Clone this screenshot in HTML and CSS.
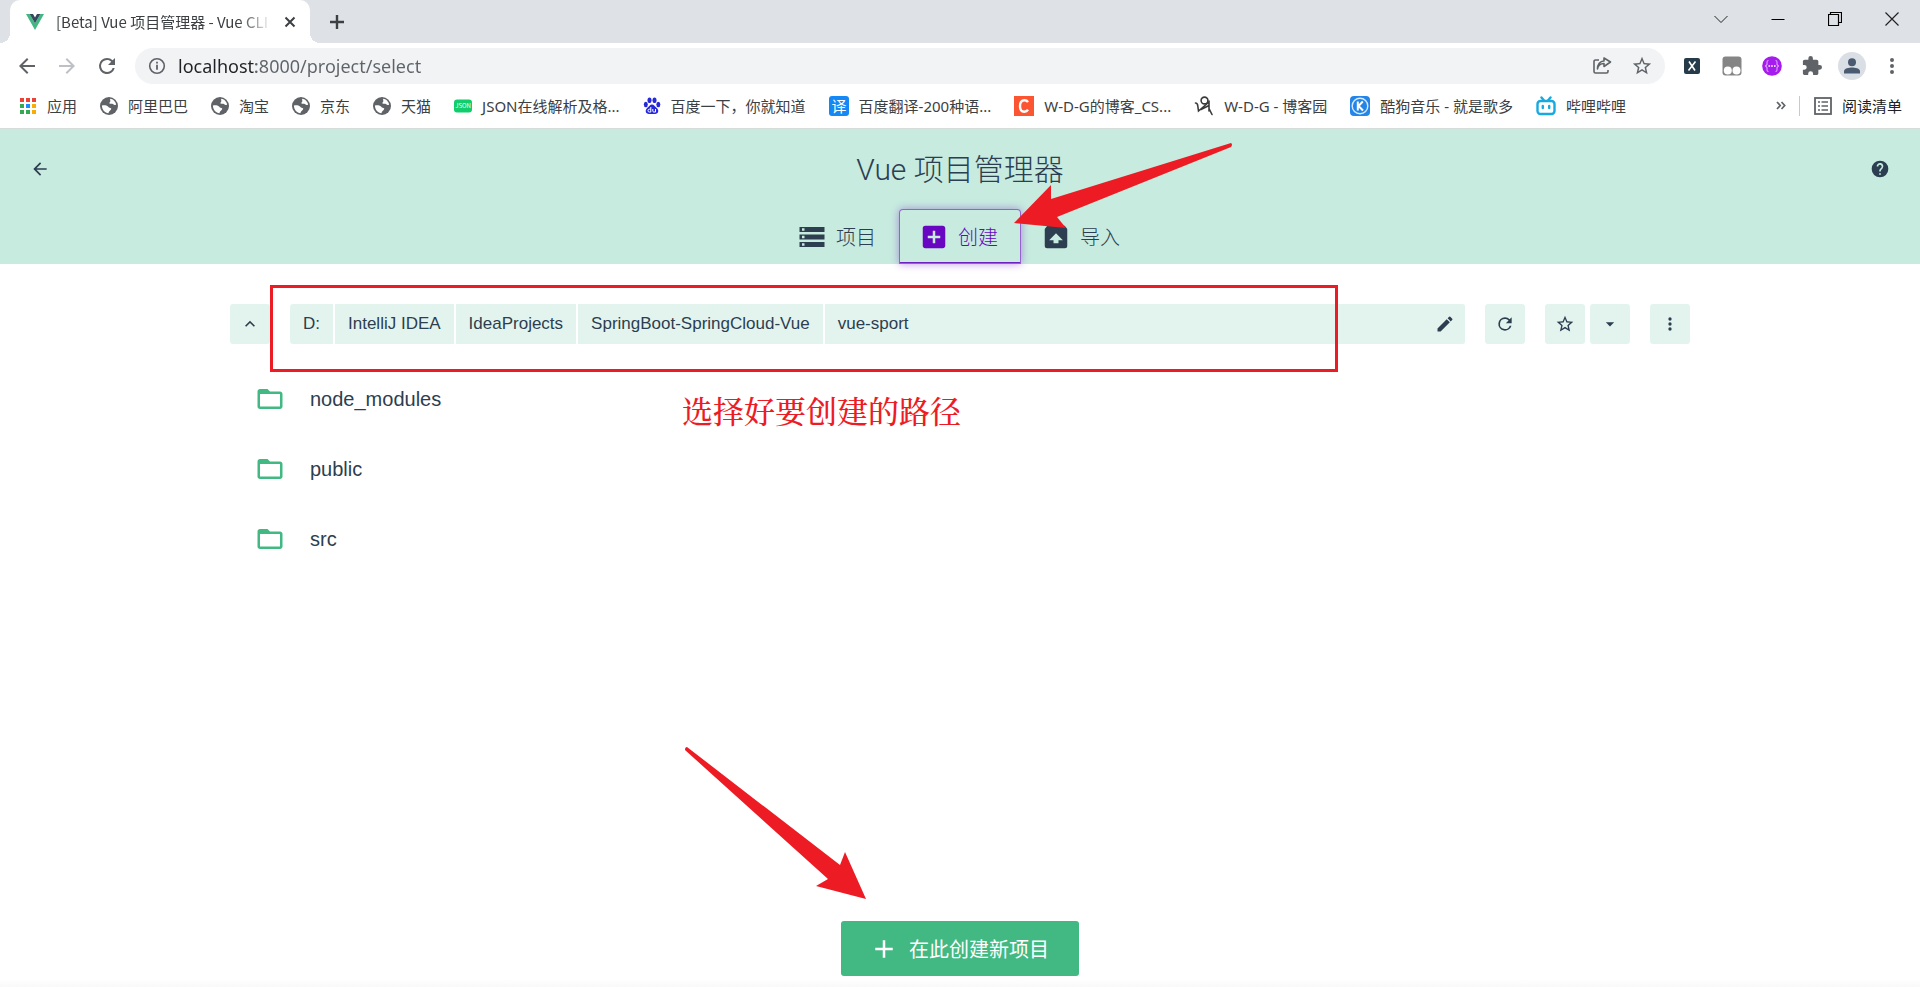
FILE: index.html
```html
<!DOCTYPE html>
<html lang="zh-CN">
<head>
<meta charset="utf-8">
<title>[Beta] Vue 项目管理器 - Vue CLI</title>
<link rel="stylesheet" href="styles.css">
</head>
<body>
<svg class="defs" width="0" height="0" aria-hidden="true">
  <symbol id="globe" viewBox="0 0 18 18"><circle cx="9" cy="9" r="9" fill="#5f6368"/><path d="M10 1.800C13 2 15.500 4.500 16.100 7.500 15 8.500 13.800 8 13 7 12 6.500 10.500 7 9.500 6.500 8.800 5.500 10.800 5 10.300 3.800ZM1.900 8.500C4 8 6.500 8 8 9.500 8.500 11 10.500 10.500 11.200 11.500 11.500 13 9 13.500 8.500 16.200 5 16 2 13 1.900 8.500Z" fill="#fff"/></symbol>
  <symbol id="star" viewBox="0 0 24 24"><path d="M22 9.240l-7.190-.62L12 2 9.190 8.630 2 9.240l5.460 4.730L5.820 21 12 17.270 18.180 21l-1.630-7.030L22 9.240zM12 15.400l-3.760 2.270 1-4.280-3.320-2.880 4.380-.38L12 6.100l1.710 4.040 4.380.38-3.320 2.880 1 4.280L12 15.400z"/></symbol>
  <symbol id="reload" viewBox="0 0 24 24"><path d="M17.650 6.350A7.960 7.960 0 0 0 12 4a8 8 0 1 0 7.730 10h-2.080A6 6 0 1 1 12 6c1.660 0 3.140.69 4.220 1.780L13 11h7V4l-2.350 2.350z"/></symbol>
  <symbol id="back" viewBox="0 0 24 24"><path d="M20 11H7.830l5.590-5.590L12 4l-8 8 8 8 1.410-1.410L7.830 13H20v-2z"/></symbol>
  <symbol id="dots" viewBox="0 0 24 24"><path d="M12 8a2 2 0 1 0 0-4 2 2 0 0 0 0 4zm0 2a2 2 0 1 0 0 4 2 2 0 0 0 0-4zm0 6a2 2 0 1 0 0 4 2 2 0 0 0 0-4z"/></symbol>
  <symbol id="folder" viewBox="0 0 24 24"><path d="M20 6h-8l-2-2H4c-1.100 0-1.990.9-1.990 2L2 18c0 1.100.9 2 2 2h16c1.100 0 2-.9 2-2V8c0-1.100-.9-2-2-2zm0 12H4V8h16v10z"/></symbol>
</svg>

<header class="browser">
  <div class="tabstrip">
    <div class="tab">
      <svg class="i18" viewBox="0 0 18 18"><path d="M0 1h3.600L9 10.300 14.400 1H18L9 17Z" fill="#41b883"/><path d="M3.600 1H7L9 4.500 11 1h3.400L9 10.300Z" fill="#35495e"/></svg>
      <span class="tab-title">[Beta] Vue 项目管理器 - Vue CLI</span>
      <button class="plain" aria-label="关闭标签页"><svg class="i12" viewBox="0 0 12 12"><path d="M1.500 1.500l9 9M10.500 1.500l-9 9" stroke="#3c4043" stroke-width="2"/></svg></button>
    </div>
    <button class="plain new-tab" aria-label="新标签页"><svg class="i16" viewBox="0 0 16 16"><path d="M8 1v14M1 8h14" stroke="#3c4043" stroke-width="2.400"/></svg></button>
    <div class="window-buttons">
      <button class="plain" aria-label="搜索标签页"><svg class="i14" viewBox="0 0 14 14"><path d="M.5 4L7 10.500 13.500 4" fill="none" stroke="#222"/></svg></button>
      <button class="plain" aria-label="最小化"><svg class="i14" viewBox="0 0 14 14"><path d="M.5 7.500h13" stroke="#000"/></svg></button>
      <button class="plain" aria-label="还原"><svg class="i14" viewBox="0 0 14 14"><path d="M.5 2.500h10v11H.5zM2.500 2.500v-2h11v10h-3" fill="none" stroke="#000" stroke-width="1.200"/></svg></button>
      <button class="plain" aria-label="关闭"><svg class="i14" viewBox="0 0 14 14"><path d="M.5.5l13 13M13.500.5l-13 13" stroke="#222" stroke-width="1.200"/></svg></button>
    </div>
  </div>

  <div class="toolbar">
    <div class="nav-buttons">
      <button class="plain" aria-label="后退"><svg class="i24" fill="#5f6368"><use href="#back"/></svg></button>
      <button class="plain forward" aria-label="前进"><svg class="i24 flip" fill="#bdc1c6"><use href="#back"/></svg></button>
      <button class="plain" aria-label="重新加载"><svg class="i24" fill="#5f6368"><use href="#reload"/></svg></button>
    </div>
    <div class="omnibox">
      <svg class="i18" viewBox="0 0 18 18"><circle cx="9" cy="9" r="7.300" fill="none" stroke="#5f6368" stroke-width="1.600"/><path d="M8.100 7.800h1.800v5H8.100zM8.100 4.800h1.800v1.800H8.100z" fill="#5f6368"/></svg>
      <input class="url" type="text" aria-label="地址" value="localhost:8000/project/select">
      <button class="plain" aria-label="分享"><svg class="i20" viewBox="0 0 20 20" fill="none" stroke="#5f6368" stroke-width="1.600" stroke-linejoin="round"><path d="M7 4H3.500A1.500 1.500 0 0 0 2 5.500v10A1.500 1.500 0 0 0 3.500 17h11a1.500 1.500 0 0 0 1.500-1.500V14M5.500 13C6 9.500 8.500 7.500 12 7.500v3L18.500 6 12 2v3C8 5 5.500 8.500 5.500 13Z"/></svg></button>
      <button class="plain" aria-label="收藏"><svg class="i22" fill="#5f6368"><use href="#star"/></svg></button>
    </div>
    <div class="extensions">
      <button class="plain" aria-label="扩展 X"><svg class="i16" viewBox="0 0 16 16"><rect width="16" height="16" rx="2" fill="#263b49"/><path d="M5 3.500l6 9M11.500 3.500l-7 9" stroke="#fff" stroke-width="1.600"/></svg></button>
      <button class="plain" aria-label="扩展 Tampermonkey"><svg class="i20" viewBox="0 0 20 20"><rect x=".5" y=".5" width="19" height="19" rx="3" fill="#858585"/><circle cx="5.800" cy="14.500" r="4" fill="#fff"/><circle cx="14.500" cy="14.500" r="4" fill="#fff"/></svg></button>
      <button class="plain" aria-label="扩展 JSON"><svg class="i20" viewBox="0 0 20 20"><circle cx="10" cy="10" r="9.800" fill="#a61bee"/><path d="M6.500 4.500Q5 4.500 5 6v2.500L3.500 10 5 11.500V14q0 1.500 1.500 1.500M13.500 4.500q1.500 0 1.500 1.500v2.500l1.500 1.500-1.500 1.500V14q0 1.500-1.500 1.500" fill="none" stroke="#dba3fa" stroke-width="1.100"/><path d="M6.500 10h1.600M9.200 10h1.600M12 10h1.600" stroke="#fff" stroke-width="1.600"/></svg></button>
      <button class="plain" aria-label="扩展程序"><svg class="i20" viewBox="1 1 22 22"><path fill="#5f6368" d="M20.500 11H19V7c0-1.100-.9-2-2-2h-4V3.500a2.500 2.500 0 0 0-5 0V5H4c-1.100 0-2 .9-2 2v3.800h1.500a2.700 2.700 0 0 1 0 5.400H2V20c0 1.100.9 2 2 2h3.800v-1.500a2.700 2.700 0 0 1 5.400 0V22H17c1.100 0 2-.9 2-2v-4h1.500a2.500 2.500 0 0 0 0-5z"/></svg></button>
      <button class="plain" aria-label="用户"><svg class="i28" viewBox="0 0 28 28"><circle cx="14" cy="14" r="14" fill="#dadfe5"/><circle cx="14" cy="10.200" r="4" fill="#4a5a70"/><path d="M6 21.500v-2.200C6 16.500 11 15.500 14 15.500s8 1 8 3.800v2.200Z" fill="#4a5a70"/></svg></button>
      <button class="plain" aria-label="菜单"><svg class="i24" fill="#5f6368"><use href="#dots"/></svg></button>
    </div>
  </div>

  <nav class="bookmarks" aria-label="书签">
    <a href="#"><svg class="i18" viewBox="0 0 18 18"><path d="M1 1h4v4H1zM7 1h4v4H7zM13 1h4v4h-4z" fill="#ea4335"/><path d="M1 7h4v4H1zM1 13h4v4H1z" fill="#34a853"/><path d="M7 7h4v4H7z" fill="#1a8cff"/><path d="M13 7h4v4h-4zM13 13h4v4h-4z" fill="#fbac04"/><path d="M7 13h4v4H7z" fill="#34a853"/></svg>应用</a>
    <a href="#"><svg class="i18"><use href="#globe"/></svg>阿里巴巴</a>
    <a href="#"><svg class="i18"><use href="#globe"/></svg>淘宝</a>
    <a href="#"><svg class="i18"><use href="#globe"/></svg>京东</a>
    <a href="#"><svg class="i18"><use href="#globe"/></svg>天猫</a>
    <a href="#"><svg class="i18" viewBox="0 0 18 18"><rect y="2.500" width="18" height="13" rx="3" fill="#0fce6b"/><text x="9" y="11.200" class="mini" font-size="6">JSON</text></svg>JSON在线解析及格...</a>
    <a href="#"><svg class="i18" viewBox="0 0 18 18" fill="#2529d8"><ellipse cx="2.800" cy="7.500" rx="2" ry="2.700"/><ellipse cx="6.500" cy="3.300" rx="2" ry="2.800"/><ellipse cx="11.500" cy="3.300" rx="2" ry="2.800"/><ellipse cx="15.300" cy="7.500" rx="2" ry="2.700"/><path d="M9 7.500c2 0 3 2 4.500 3.300 3 2.500 2 6.200-1.500 6.200H6c-3.500 0-4.500-3.700-1.500-6.200C6 9.500 7 7.500 9 7.500Z"/><path d="M7.800 10v5H6.300q-1.300 0-1.300-1.400T6.300 12.200h1.500M9.800 12v2q0 1 1 1h1.700v-3" fill="none" stroke="#fff"/></svg>百度一下，你就知道</a>
    <a href="#"><svg class="i20" viewBox="0 0 20 20"><rect width="20" height="20" rx="3" fill="#1488f5"/><text x="10" y="15.500" class="mini" font-size="15">译</text></svg>百度翻译-200种语...</a>
    <a href="#"><svg class="i20" viewBox="0 0 20 20"><rect width="20" height="20" fill="#fc5531"/><path d="M14 6.200Q12.800 4.300 10.500 4.300 6 4.300 6 10t4.200 5.700q2.600 0 3.800-2" fill="none" stroke="#fff" stroke-width="2.400"/></svg>W-D-G的博客_CS...</a>
    <a href="#"><svg class="i20" viewBox="0 0 20 20" fill="none" stroke="#3b3b3b" stroke-width="1.600"><circle cx="10.500" cy="4.500" r="3.400"/><path d="M1.500 7Q3.500 7 3.800 10L4.500 15 15 6M7 13.500L15 9.500M15 5v7.500L18 18.500M15 12v3" stroke-linecap="round"/></svg>W-D-G - 博客园</a>
    <a href="#"><svg class="i20" viewBox="0 0 20 20"><rect width="20" height="20" rx="4" fill="#2385e8"/><circle cx="10" cy="10" r="7.800" fill="none" stroke="#d5eaff" stroke-width="1.400"/><path d="M7.800 5.500v9M12.800 5.500L8.500 10l4.500 4.500" fill="none" stroke="#fff" stroke-width="2"/></svg>酷狗音乐 - 就是歌多</a>
    <a href="#"><svg class="i20" viewBox="0 0 20 20" fill="none" stroke="#18a9df" stroke-width="2.400"><rect x="1.500" y="5" width="17" height="13" rx="3"/><path d="M5.500 1.500L8 4.500M14.500 1.500L12 4.500M6.800 10v2M13.200 10v2" stroke-linecap="round"/></svg>哔哩哔哩</a>
    <div class="bookmarks-end">
      <button class="plain more" aria-label="更多书签"><svg class="i12" viewBox="0 0 12 12"><path d="M2 2l3.200 3.500L2 9M6.500 2l3.200 3.500L6.500 9" fill="none" stroke="#5f6368" stroke-width="1.700"/></svg></button>
      <a class="reading" href="#"><svg class="i18" viewBox="0 0 18 18"><rect x="1" y="1" width="16" height="16" fill="none" stroke="#5f6368" stroke-width="1.800"/><path d="M4 5h2M7.500 5H14M4 9h2M7.500 9H14M4 13h2M7.500 13H14" stroke="#5f6368" stroke-width="1.700"/></svg>阅读清单</a>
    </div>
  </nav>
</header>

<section class="hero">
  <div class="hero-top">
    <button class="plain" aria-label="返回"><svg class="i20" fill="#2c3e50"><use href="#back"/></svg></button>
    <h1>Vue 项目管理器</h1>
    <button class="plain" aria-label="帮助"><svg class="i20" viewBox="0 0 24 24"><path fill="#2c3e50" d="M12 2a10 10 0 1 0 0 20 10 10 0 0 0 0-20zm1 17h-2v-2h2v2zm2.070-7.750l-.9.920C13.450 12.900 13 13.500 13 15h-2v-.5c0-1.100.45-2.100 1.170-2.830l1.240-1.260A2 2 0 1 0 10 9H8a4 4 0 1 1 7.070 2.250z"/></svg></button>
  </div>
  <nav class="views">
    <a href="#"><svg class="i30" viewBox="0 0 24 24" fill="#2c3e50"><path d="M2 20h20v-4H2v4zm2-3h2v2H4v-2zM2 4v4h20V4H2zm4 3H4V5h2v2zm-4 7h20v-4H2v4zm2-3h2v2H4v-2z"/></svg>项目</a>
    <a href="#" class="active" aria-current="page"><svg class="i30" viewBox="0 0 24 24" fill="#6806c1"><path d="M19 3H5a2 2 0 0 0-2 2v14c0 1.100.9 2 2 2h14c1.100 0 2-.9 2-2V5c0-1.100-.9-2-2-2zm-2 10h-4v4h-2v-4H7v-2h4V7h2v4h4v2z"/></svg>创建</a>
    <a href="#"><svg class="i30" viewBox="0 0 24 24" fill="#2c3e50"><path d="M5 3h14l2 2.500V19a2 2 0 0 1-2 2H5a2 2 0 0 1-2-2V5.500Zm7 6l-5.500 5.500H10V17h4v-2.500h3.500Z"/></svg>导入</a>
  </nav>
</section>

<main>
  <div class="path-row">
    <button class="sq" aria-label="上级目录"><svg class="i20" viewBox="0 0 24 24"><path d="M12 8l-6 6 1.410 1.410L12 10.830l4.590 4.580L18 14z"/></svg></button>
    <div class="crumbs">
      <button>D:</button><button>IntelliJ IDEA</button><button>IdeaProjects</button><button>SpringBoot-SpringCloud-Vue</button>
      <div class="crumb-last"><button>vue-sport</button><button class="edit" aria-label="编辑路径"><svg class="i20" viewBox="0 0 24 24"><path d="M3 17.250V21h3.750L17.810 9.940l-3.750-3.750L3 17.250zM20.710 7.040a1 1 0 0 0 0-1.410l-2.340-2.340a1 1 0 0 0-1.410 0l-1.830 1.830 3.750 3.750 1.830-1.830z"/></svg></button></div>
    </div>
    <button class="sq" aria-label="刷新"><svg class="i20"><use href="#reload"/></svg></button>
    <div class="pair">
      <button class="sq" aria-label="收藏目录"><svg class="i20"><use href="#star"/></svg></button>
      <button class="sq" aria-label="收藏列表"><svg class="i20" viewBox="0 0 24 24"><path d="M7 10l5 5 5-5z"/></svg></button>
    </div>
    <button class="sq" aria-label="更多"><svg class="i20"><use href="#dots"/></svg></button>
  </div>
  <ul class="folders">
    <li><a href="#"><svg class="i30"><use href="#folder"/></svg>node_modules</a></li>
    <li><a href="#"><svg class="i30"><use href="#folder"/></svg>public</a></li>
    <li><a href="#"><svg class="i30"><use href="#folder"/></svg>src</a></li>
  </ul>
</main>

<footer>
  <button class="create"><svg class="i30" viewBox="0 0 24 24" fill="#fff"><path d="M19 13h-6v6h-2v-6H5v-2h6V5h2v6h6v2z"/></svg>在此创建新项目</button>
</footer>

<div class="note-box"></div>
<p class="note">选择好要创建的路径</p>
<svg class="arrow arrow-top" viewBox="0 0 220 88"><path d="M0 81L37 43V57L217 1Q219 2 217 5L43 75 52 86Z"/></svg>
<svg class="arrow arrow-bottom" viewBox="0 0 184 154"><path d="M3 1L156 119 161 106 182 153 132 140 144 133 1 4Q1 1 3 1Z"/></svg>
</body>
</html>
```
FILE: styles.css
```css
* { box-sizing: border-box; }

body {
  margin: 0;
  min-height: 100vh;
  display: flex;
  flex-direction: column;
  position: relative;
  background: #fff;
  color: #2c3e50;
  font-family: "Liberation Sans", "Noto Sans CJK SC", sans-serif;
  font-size: 20px;
}

svg { display: block; flex: none; }
.defs { position: absolute; }
a { color: inherit; text-decoration: none; }
button { font: inherit; color: inherit; border: 0; cursor: pointer; }
.plain { background: none; padding: 0; display: flex; align-items: center; justify-content: center; }

.i12 { width: 12px; height: 12px; }
.i14 { width: 14px; height: 14px; }
.i16 { width: 16px; height: 16px; }
.i18 { width: 18px; height: 18px; }
.i20 { width: 20px; height: 20px; }
.i22 { width: 22px; height: 22px; }
.i24 { width: 24px; height: 24px; }
.i28 { width: 28px; height: 28px; }
.i30 { width: 30px; height: 30px; }
.flip { transform: scaleX(-1); }
.mini { fill: #fff; text-anchor: middle; font-family: "Noto Sans CJK SC", sans-serif; }

/* Browser frame */
.browser {
  font-family: "Noto Sans CJK SC", sans-serif;
  font-size: 15px;
  color: #3c4043;
  border-bottom: 1px solid #d5dcda;
}
.tabstrip { display: flex; height: 43px; background: #dee1e6; padding: 0 0 0 10px; }
.tab {
  position: relative;
  width: 300px;
  display: flex;
  align-items: center;
  gap: 12px;
  padding: 0 14px 0 16px;
  background: #fff;
  border-radius: 10px 10px 0 0;
}
.tab::before, .tab::after {
  content: "";
  position: absolute;
  bottom: 0;
  width: 10px;
  height: 10px;
}
.tab::before { left: -10px; background: radial-gradient(circle at 0 0, #dee1e6 10px, #fff 10px); }
.tab::after { right: -10px; background: radial-gradient(circle at 100% 0, #dee1e6 10px, #fff 10px); }
.tab-title {
  flex: 1;
  overflow: hidden;
  white-space: nowrap;
  -webkit-mask-image: linear-gradient(to right, #000 85%, transparent);
  mask-image: linear-gradient(to right, #000 85%, transparent);
}
.new-tab { width: 54px; }
.window-buttons { display: flex; margin-left: auto; }
.window-buttons button { width: 57px; height: 37px; }

.toolbar { display: flex; align-items: center; height: 45px; padding: 0 8px 0 7px; }
.nav-buttons { display: flex; width: 128px; }
.nav-buttons button { width: 40px; height: 36px; }
.omnibox {
  flex: 1;
  display: flex;
  align-items: center;
  height: 36px;
  padding: 0 13px;
  background: #f1f3f4;
  border-radius: 18px;
}
.url {
  flex: 1;
  min-width: 0;
  margin-left: 12px;
  border: 0;
  padding: 0;
  outline: 0;
  font: 18px "Noto Sans", sans-serif;
  color: #5f6368;
  background: linear-gradient(to right, #202124 78px, #5f6368 78px);
  -webkit-background-clip: text;
  background-clip: text;
  -webkit-text-fill-color: transparent;
}
.omnibox button { width: 20px; margin-left: 20px; }
.extensions { display: flex; padding-left: 7px; }
.extensions button { width: 40px; height: 36px; }

.bookmarks {
  display: flex;
  align-items: center;
  gap: 23px;
  height: 40px;
  padding: 0 18px 4px 19px;
  font-family: "Noto Sans", "Noto Sans CJK SC", sans-serif;
  white-space: nowrap;
}
.bookmarks a { display: flex; align-items: center; gap: 10px; line-height: 20px; }
.bookmarks-end { display: flex; align-items: center; margin-left: auto; }
.more { margin-right: 12px; }
.bookmarks .reading { border-left: 1px solid #c6c9cd; padding-left: 14px; color: #202124; }

/* Green header */
.hero { background: #c7ebdf; }
.hero-top { display: flex; align-items: center; justify-content: space-between; height: 80px; padding: 0 30px; }
h1 { margin: 0; padding-top: 2px; font: 300 30px "Roboto", "Noto Sans CJK SC", sans-serif; line-height: 40px; }
.views { display: flex; justify-content: center; font-weight: 300; }
.views a {
  display: flex;
  align-items: center;
  gap: 9px;
  height: 55px;
  padding: 0 23px 0 20px;
}
.views .active {
  color: #6806c1;
  border-radius: 4px 4px 0 0;
  box-shadow: inset 0 0 0 1px #9560cf, inset 0 -2px 0 #6f1fc4, 0 0 8px rgba(104, 6, 193, 0.4);
}

/* Folder explorer */
main { flex: 1; padding: 40px 230px 0; }
.path-row { display: flex; gap: 20px; }
.path-row svg { fill: #2c3e50; }
.sq {
  width: 40px;
  height: 40px;
  padding: 0;
  display: flex;
  align-items: center;
  justify-content: center;
  background: #e3f4ee;
  border-radius: 3px;
}
.pair { display: flex; gap: 5px; }
.crumbs { flex: 1; display: flex; gap: 2px; height: 40px; border-radius: 3px; overflow: hidden; font-size: 17px; }
.crumbs button { background: #e3f4ee; padding: 0 13px; }
.crumb-last { flex: 1; display: flex; justify-content: space-between; background: #e3f4ee; }
.crumb-last .edit { padding: 0 10px; }
.folders { list-style: none; margin: 20px 0 0; padding: 0; }
.folders a { display: flex; align-items: center; gap: 25px; height: 70px; padding-left: 25px; }
.folders svg { fill: #42b983; }

footer {
  display: flex;
  justify-content: center;
  padding-bottom: 11px;
  background: linear-gradient(to top, #f9f9f9, #fff 8px);
}
.create {
  display: flex;
  align-items: center;
  gap: 10px;
  height: 55px;
  padding: 0 30px 0 28px;
  border-radius: 3px;
  background: #42b983;
  color: #fff;
}

/* Red annotations over the page */
.note-box, .note, .arrow { position: absolute; pointer-events: none; }
.note-box { left: 270px; top: 285px; width: 1068px; height: 87px; border: 3px solid #ed1c24; }
.note {
  left: 682px;
  top: 389px;
  margin: 0;
  font: 31px "Noto Serif CJK SC", "Noto Sans CJK SC", serif;
  font-weight: 500;
  line-height: 42px;
  color: #ed1c24;
}
.arrow { fill: #ed1c24; }
.arrow-top { left: 1014px; top: 142px; width: 220px; height: 88px; }
.arrow-bottom { left: 684px; top: 746px; width: 184px; height: 154px; }
```
